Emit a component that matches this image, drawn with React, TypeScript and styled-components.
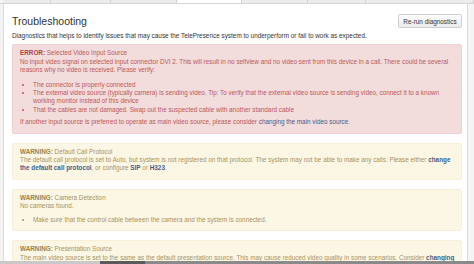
import React from "react";
import styled, { createGlobalStyle } from "styled-components";

const GlobalStyle = createGlobalStyle`
  html, body {
    margin: 0;
    padding: 0;
    background: #f4f4f4;
    font-family: "Liberation Sans", Arial, sans-serif;
  }
`;

const Page = styled.div`
  width: 474px;
  height: 264px;
  display: flex;
  flex-direction: column;
  overflow: hidden;
  background: #f4f4f4;
`;

const TabStrip = styled.div`
  height: 3px;
  display: flex;
  padding-left: 3px;
  border-bottom: 1px solid #d6d6d6;
  flex-shrink: 0;
`;

const Tab = styled.div<{ $w: number; $active?: boolean }>`
  width: ${(p) => p.$w}px;
  background: ${(p) => (p.$active ? "#ffffff" : "#ececec")};
  border-right: 1px solid #d0d0d0;
`;

const Panel = styled.div`
  flex: 1;
  min-height: 0;
  margin: 0 6px 0 3px;
  background: #ffffff;
  border-left: 1px solid #dcdcdc;
  border-right: 1px solid #dcdcdc;
  padding: 8px 5px 0 8px;
  overflow: hidden;
`;

const Header = styled.div`
  display: flex;
  align-items: center;
  justify-content: space-between;
  height: 18px;
`;

const Title = styled.h1`
  margin: 0;
  font-size: 10.5px;
  font-weight: normal;
  color: #333;
`;

const Button = styled.button`
  height: 14px;
  width: 64px;
  padding: 0;
  font-family: inherit;
  font-size: 6.4px;
  color: #333;
  background: linear-gradient(#fdfdfd, #ececec);
  border: 1px solid #cfcfcf;
  border-radius: 2px;
`;

const Intro = styled.p`
  margin: 2px 0 4px;
  font-size: 6.4px;
  line-height: 8.4px;
  color: #333;
`;

const Alert = styled.div<{ $kind: "error" | "warning" }>`
  margin-bottom: 9px;
  padding: 4px 3px 6px 7px;
  font-size: 6.35px;
  line-height: 8.4px;
  border-radius: 2px;
  background: ${(p) => (p.$kind === "error" ? "#f2dcdc" : "#fcf7e4")};
  border: 1px solid ${(p) => (p.$kind === "error" ? "#eed1d3" : "#f8efd6")};
  color: ${(p) => (p.$kind === "error" ? "#bd5a58" : "#a8935f")};
`;

const Label = styled.strong<{ $kind: "error" | "warning" }>`
  color: ${(p) => (p.$kind === "error" ? "#b04442" : "#9c7f45")};
`;

const Para = styled.p`
  margin: 0;
`;

const List = styled.ul<{ $last?: boolean }>`
  margin: ${(p) => (p.$last ? "5px 0 0" : "6px 0 4px")};
  padding-left: 13px;
`;

const Link = styled.a<{ $bold?: boolean }>`
  color: #3e5f8c;
  font-weight: ${(p) => (p.$bold ? "bold" : "normal")};
  text-decoration: none;
`;

const BottomBar = styled.div`
  height: 3px;
  flex-shrink: 0;
  display: flex;
`;

const BarPart = styled.div<{ $w?: number; $c: string }>`
  ${(p) => (p.$w ? `width: ${p.$w}px;` : "flex: 1;")}
  background: ${(p) => p.$c};
`;

const tabs = [47, 60, 65, 65, 65, 57, 108];

export default function App() {
  return (
    <Page>
      <GlobalStyle />
      <TabStrip>
        {tabs.map((w, i) => (
          <Tab key={i} $w={w} $active={i === 3} />
        ))}
      </TabStrip>
      <Panel>
        <Header>
          <Title>Troubleshooting</Title>
          <Button>Re-run diagnostics</Button>
        </Header>
        <Intro>
          Diagnostics that helps to identify issues that may cause the TelePresence system to underperform or fail to work as expected.
        </Intro>

        <Alert $kind="error">
          <Para>
            <Label $kind="error">ERROR:</Label> Selected Video Input Source
          </Para>
          <Para>
            No input video signal on selected input connector DVI 2. This will result in no selfview and no video sent from this device in a call. There could be several
            <br />
            reasons why no video is received. Please verify:
          </Para>
          <List>
            <li>The connector is properly connected</li>
            <li>
              The external video source (typically camera) is sending video. Tip: To verify that the external video source is sending video, connect it to a known
              <br />
              working monitor instead of this device
            </li>
            <li>That the cables are not damaged. Swap out the suspected cable with another standard cable</li>
          </List>
          <Para>
            If another input source is preferred to operate as main video source, please consider{" "}
            <Link>changing the main video source</Link>.
          </Para>
        </Alert>

        <Alert $kind="warning">
          <Para>
            <Label $kind="warning">WARNING:</Label> Default Call Protocol
          </Para>
          <Para>
            The default call protocol is set to Auto, but system is not registered on that protocol. The system may not be able to make any calls. Please either{" "}
            <Link $bold>change</Link>
            <br />
            <Link $bold>the default call protocol</Link>, or configure <Link $bold>SIP</Link> or <Link $bold>H323</Link>.
          </Para>
        </Alert>

        <Alert $kind="warning">
          <Para>
            <Label $kind="warning">WARNING:</Label> Camera Detection
          </Para>
          <Para>No cameras found.</Para>
          <List $last>
            <li>Make sure that the control cable between the camera and the system is connected.</li>
          </List>
        </Alert>

        <Alert $kind="warning">
          <Para>
            <Label $kind="warning">WARNING:</Label> Presentation Source
          </Para>
          <Para>
            The main video source is set to the same as the default presentation source. This may cause reduced video quality in some scenarios. Consider{" "}
            <Link $bold>changing</Link>
            <br />
            <Link $bold>the main video source</Link>.
          </Para>
        </Alert>
      </Panel>
      <BottomBar>
        <BarPart $w={100} $c="#c9c9c9" />
        <BarPart $w={45} $c="#5a5a5a" />
        <BarPart $c="#8a8a8a" />
      </BottomBar>
    </Page>
  );
}
